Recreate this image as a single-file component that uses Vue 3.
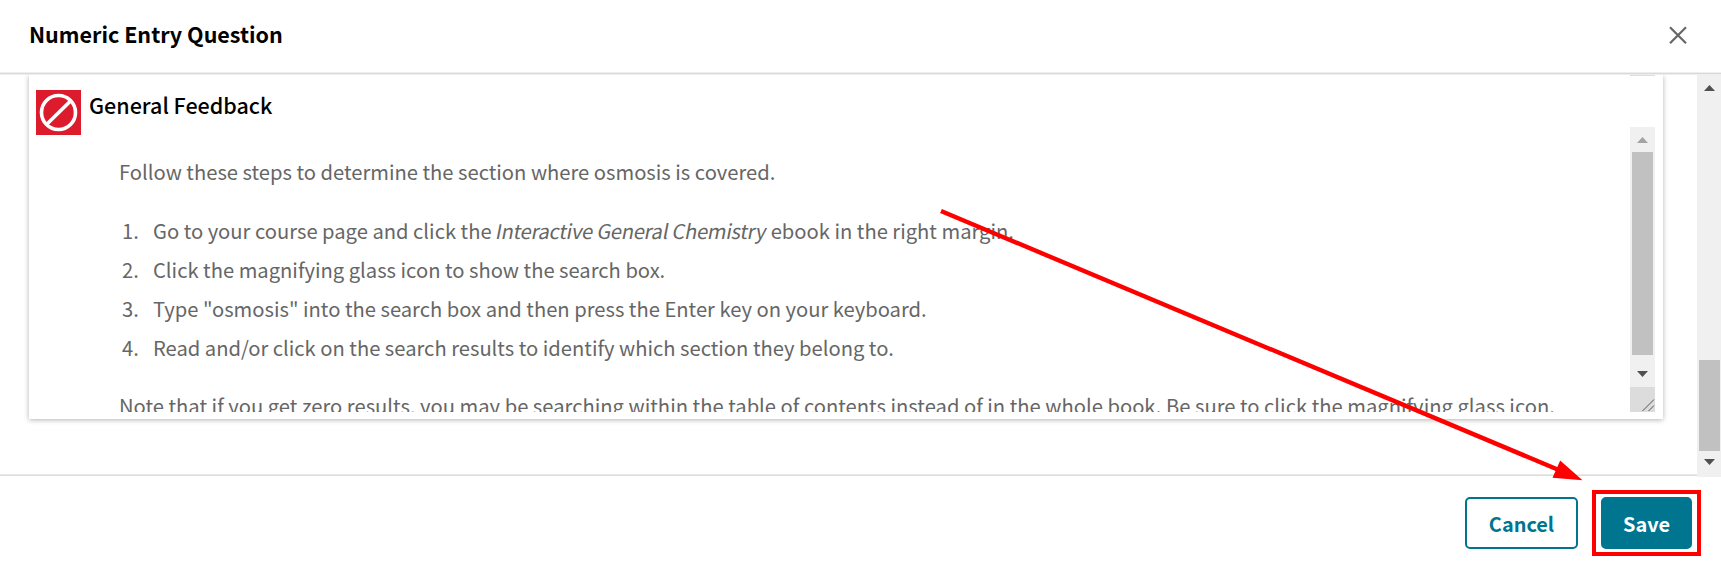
<script setup>
const steps = [
  [{ text: 'Go to your course page and click the ' }, { text: 'Interactive General Chemistry', em: true }, { text: ' ebook in the right margin.' }],
  [{ text: 'Click the magnifying glass icon to show the search box.' }],
  [{ text: 'Type "osmosis" into the search box and then press the Enter key on your keyboard.' }],
  [{ text: 'Read and/or click on the search results to identify which section they belong to.' }],
]
</script>

<template>
  <div class="dialog">
    <header class="header">
      <h1>Numeric Entry Question</h1>
      <button class="close" aria-label="Close">
        <svg width="18" height="18" viewBox="0 0 18 18"><path d="M1 1.2 17 17.2M17 1.2 1 17.2" /></svg>
      </button>
    </header>

    <main class="body">
      <div class="page">
        <section class="card">
          <div class="stub"></div>
          <div class="card-head">
            <svg class="badge" width="45" height="45" viewBox="0 0 45 45">
              <rect width="45" height="45" fill="#dc1b2d" />
              <circle cx="22.5" cy="22.5" r="17" />
              <path d="M10.5 34.5 34.5 11" />
            </svg>
            <h2>General Feedback</h2>
          </div>
          <div class="editor">
            <div class="text">
              <p>Follow these steps to determine the section where osmosis is covered.</p>
              <ol>
                <li v-for="(step, i) in steps" :key="i">
                  <span class="num">{{ i + 1 }}.</span>
                  <span class="step"><span v-for="(part, j) in step" :key="j" :class="{ em: part.em }">{{ part.text }}</span></span>
                </li>
              </ol>
              <p class="note">Note that if you get zero results, you may be searching within the table of contents instead of in the whole book. Be sure to click the magnifying glass icon.</p>
            </div>
            <div class="side">
              <div class="bar inner-bar">
                <svg class="muted" width="11" height="6" viewBox="0 0 11 6"><path d="M0 6 5.5 0 11 6Z" /></svg>
                <div class="thumb"></div>
                <svg width="11" height="6" viewBox="0 0 11 6"><path d="M0 0 5.5 6 11 0Z" /></svg>
              </div>
              <svg class="grip" width="25" height="25" viewBox="0 0 25 25"><path d="M12.5 24 24 12.5M18.5 24 24 18.5" /></svg>
            </div>
          </div>
        </section>
      </div>
      <div class="bar outer-bar">
        <svg width="11" height="6" viewBox="0 0 11 6"><path d="M0 6 5.5 0 11 6Z" /></svg>
        <div class="thumb"></div>
        <svg width="11" height="6" viewBox="0 0 11 6"><path d="M0 0 5.5 6 11 0Z" /></svg>
      </div>
    </main>

    <footer class="footer">
      <button class="btn">Cancel</button>
      <div class="highlight"><button class="btn primary">Save</button></div>
    </footer>

    <svg class="arrow" width="1721" height="568" viewBox="0 0 1721 568">
      <path d="M941 211 1560 470.5" stroke="#f00" stroke-width="4.4" />
      <path d="M1582.5 480.3 1552.5 477.7 1560.2 460.5Z" fill="#f00" />
    </svg>
  </div>
</template>

<style>
body { margin: 0; background: #fff; }
</style>

<style scoped>
* { box-sizing: border-box; }
.dialog {
  position: relative;
  display: flex;
  flex-direction: column;
  width: 1721px;
  height: 568px;
  overflow: hidden;
  background: #fff;
  font-family: "Noto Sans CJK SC", "Noto Sans CJK JP", sans-serif;
  font-size: 20.18px;
  color: #666;
}
h1, h2, p, ol { margin: 0; padding: 0; font-size: inherit; }
button { font: inherit; cursor: pointer; }
.header {
  display: flex;
  flex: none;
  align-items: center;
  justify-content: space-between;
  height: 75px;
  padding: 0 34px 5px 29px;
  background: linear-gradient(#eee 1px, #dadada 1px 2px, #eee 2px) bottom / 100% 3px no-repeat;
}
h1 { padding-bottom: 2px; font-size: 21.5px; font-weight: 700; color: #000; line-height: 30px; }
.close { display: flex; padding: 0; border: 0; background: none; }
.close path { stroke: #666; stroke-width: 2.2; }
.body { display: flex; flex: none; height: 402px; }
.page {
  flex: 1;
  height: 401px;
  padding: 0 34px 0 29px;
  overflow: hidden;
  background: linear-gradient(#eaeaea 1px, #dcdcdc 1px) bottom / 100% 2px no-repeat;
}
.card {
  height: 344px;
  padding: 0 8px 0 7px;
  background: #fff;
  box-shadow: 0 1px 5px rgba(0, 0, 0, .3);
}
.stub { width: 25px; height: 1px; margin-left: auto; background: #ddd; }
.card-head { display: flex; gap: 8px; height: 51px; padding-top: 14px; }
.badge { flex: none; }
.badge circle, .badge path { fill: none; stroke: #fff; stroke-width: 3.6; }
h2 { font-size: 21.5px; font-weight: 500; color: #000; line-height: 30px; }
.editor { display: flex; height: 286px; overflow: hidden; }
.text { flex: 1; height: 285px; padding: 25px 0 0 83px; white-space: nowrap; overflow: hidden; line-height: 39px; }
ol { padding: 20px 0 19px 3px; list-style: none; }
li { display: flex; height: 39px; }
.num { width: 31px; flex: none; }
.step { white-space: pre; }
.em { display: inline-block; letter-spacing: -.28px; transform: translateX(.5px) skewX(-11deg); }
.side { width: 25px; flex: none; }
.bar { display: flex; flex-direction: column; align-items: center; background: #f0f0f0; }
.bar svg { flex: none; fill: #505050; }
.bar svg.muted { fill: #a3a3a3; }
.thumb { width: 21px; background: #c1c1c1; }
.inner-bar { height: 260px; padding-top: 10px; }
.inner-bar .thumb { height: 203px; margin: 9px 0 16px; }
.grip { display: block; background: #dcdcdc; }
.grip path { stroke: #555; stroke-width: 1; }
.outer-bar { width: 24px; flex: none; padding: 10px 0 0 1px; }
.outer-bar .thumb { height: 91px; margin: 269px 0 8px; }
.note { letter-spacing: .012px; }
.footer { display: flex; justify-content: flex-end; gap: 14px; padding: 13px 20px 0 0; }
.btn {
  width: 113px;
  height: 52px;
  margin-top: 7px;
  padding: 0;
  border: 2px solid #00758f;
  border-radius: 5px;
  background: #fff;
  color: #00758f;
  font-size: 19.9px;
  font-weight: 700;
  line-height: 47px;
}
.highlight { width: 109px; height: 66px; padding: 3px 5px; border: 4px solid #f00; }
.btn.primary { width: 91px; margin: 0; background: #00758f; color: #fff; }
.arrow { position: absolute; inset: 0; pointer-events: none; }
</style>
